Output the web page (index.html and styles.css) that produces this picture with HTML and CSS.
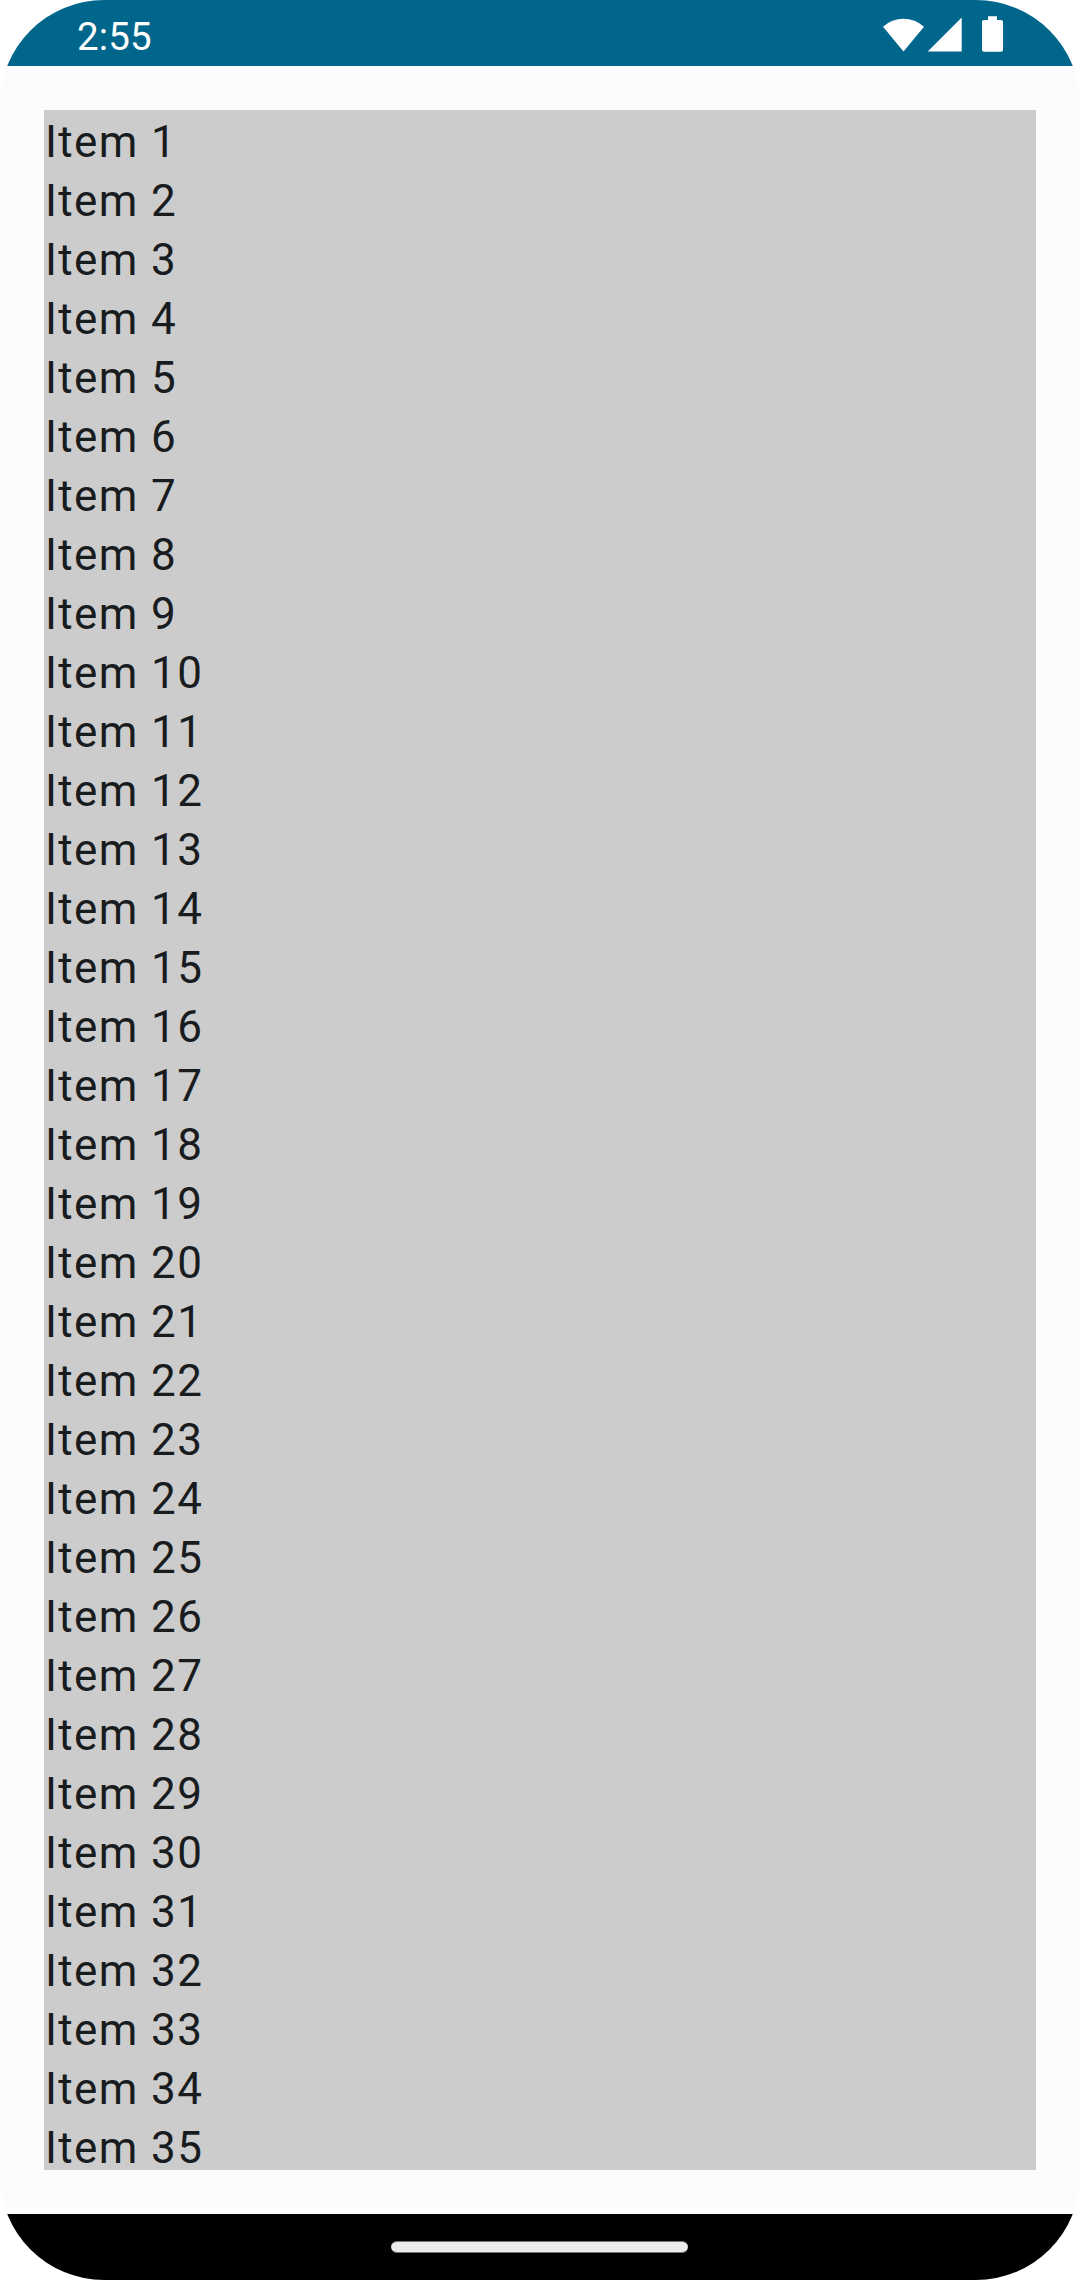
FILE: index.html
```
<!DOCTYPE html>
<html lang="en">
<head>
<meta charset="utf-8">
<title>Items</title>
<link rel="stylesheet" href="styles.css">
</head>
<body>
<div class="screen">
  <header class="status-bar">
    <span class="clock">2:55</span>
    <svg class="status-icons" width="122" height="38" viewBox="0 0 122 38">
      <path d="M0 10.8 A30 30 0 0 1 41 10.8 L20.5 35.6 Z"/>
      <path d="M44.7 35.6 L78.7 1.5 V35.6 Z"/>
      <path d="M105 0.3 H114 V4 H118 Q120 4 120 6 V33.7 Q120 35.7 118 35.7 H101 Q99 35.7 99 33.7 V6 Q99 4 101 4 H105 Z"/>
    </svg>
  </header>
  <main class="content">
    <ul class="list">
      <li>Item 1</li>
      <li>Item 2</li>
      <li>Item 3</li>
      <li>Item 4</li>
      <li>Item 5</li>
      <li>Item 6</li>
      <li>Item 7</li>
      <li>Item 8</li>
      <li>Item 9</li>
      <li>Item 10</li>
      <li>Item 11</li>
      <li>Item 12</li>
      <li>Item 13</li>
      <li>Item 14</li>
      <li>Item 15</li>
      <li>Item 16</li>
      <li>Item 17</li>
      <li>Item 18</li>
      <li>Item 19</li>
      <li>Item 20</li>
      <li>Item 21</li>
      <li>Item 22</li>
      <li>Item 23</li>
      <li>Item 24</li>
      <li>Item 25</li>
      <li>Item 26</li>
      <li>Item 27</li>
      <li>Item 28</li>
      <li>Item 29</li>
      <li>Item 30</li>
      <li>Item 31</li>
      <li>Item 32</li>
      <li>Item 33</li>
      <li>Item 34</li>
      <li>Item 35</li>
    </ul>
  </main>
  <footer class="nav-bar">
    <div class="handle"></div>
  </footer>
</div>
</body>
</html>
```
FILE: styles.css
```
body {
    margin: 0;
    background: #ffffff;
    font-family: Roboto, sans-serif;
}
.screen {
    display: flex;
    flex-direction: column;
    width: 1080px;
    height: 2280px;
    overflow: hidden;
    border-radius: 104px;
    background: #fcfcff;
}
.status-bar {
    display: flex;
    justify-content: space-between;
    box-sizing: border-box;
    height: 66px;
    padding: 16px 75px 0 77px;
    background: #00668b;
}
.clock {
    color: #ffffff;
    font-size: 38.5px;
    line-height: 41px;
    letter-spacing: 0.1px;
}
.status-icons {
    fill: #ffffff;
}
.content {
    box-sizing: border-box;
    height: 2148px;
    padding: 44px;
}
.list {
    box-sizing: border-box;
    height: 2060px;
    margin: 0;
    padding: 6px 0 0 1px;
    background: #cccccc;
    color: #191c1e;
    font-size: 44px;
    line-height: 52px;
    letter-spacing: 1.375px;
    list-style: none;
}
.list li {
    height: 52px;
    margin-bottom: 7px;
}
.list li:last-child {
    margin-bottom: 0;
}
.nav-bar {
    display: flex;
    align-items: center;
    justify-content: center;
    height: 66px;
    background: #000000;
}
.handle {
    width: 297px;
    height: 10px;
    margin-right: 1px;
    border: solid #757575;
    border-width: 1px 0;
    border-radius: 6px;
    background: #ebebeb;
}
```
